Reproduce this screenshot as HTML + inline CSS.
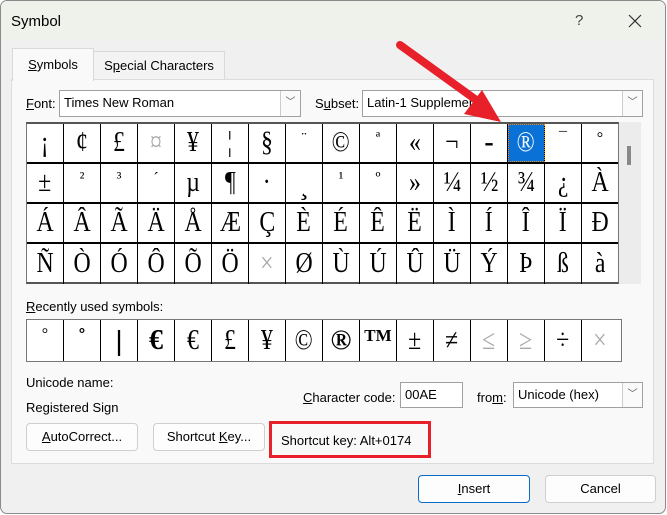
<!DOCTYPE html>
<html><head><meta charset="utf-8"><style>
*{box-sizing:border-box;margin:0;padding:0}
body{width:667px;height:515px;background:#fff;font-family:"Liberation Sans",sans-serif;font-size:12px;color:#000;position:relative;overflow:hidden}
.win{position:absolute;left:0;top:0;width:666px;height:514px;border:1px solid #8a8a8a;border-radius:7px;background:#f0f0f0;overflow:hidden}
.title{position:absolute;left:0;top:0;width:100%;height:39px;background:#eef2ea}
.a{position:absolute}
.panel{position:absolute;left:10px;top:78px;width:643px;height:385px;background:#f9f9f9;border:1px solid #dcdcdc}
.tab{position:absolute;border:1px solid #d9d9d9;border-bottom:none;background:#f9f9f9;font-size:13px;text-align:center}
.combo{position:absolute;background:#fff;border:1px solid #a0a0a0;font-size:13px;padding:4px 0 0 4px}
.combo .dd{position:absolute;right:0;top:0;bottom:0;width:20px;border-left:1px solid #ccc;background:#fafafa;font-size:10px;color:#555;text-align:center;line-height:24px}
.grid{position:absolute;left:25px;top:121px;width:593px;height:162px;background:#fff;border:1px solid #777;border-top:2px solid #555;border-bottom:2px solid #555}
.row{display:flex;height:40px;border-bottom:2px solid #000}
.row:last-child{border-bottom:none}
.c{width:37px;border-right:1px solid #000;font-family:"Liberation Serif","DejaVu Serif",serif;font-size:28px;display:flex;align-items:center;justify-content:center;flex:none}
.c span{display:inline-block;transform:scaleX(.85)}
.c:last-child{border-right:none;width:36px}
.sm{font-size:16px;align-items:flex-start;padding-top:6px}
.sel{background:#0a72d6;color:#fff;outline:1px dotted #f80;outline-offset:-1px}
.gray{color:#aaa}
.btn{position:absolute;height:28px;background:#fdfdfd;border:1px solid #cfcfcf;border-radius:4px;font-size:13px;text-align:center;line-height:26px}
u{text-decoration:underline}
</style></head><body>
<div class="win">
<div class="title"></div>
<div class="a" style="left:10px;top:12px;font-size:15px">Symbol</div>
<div class="a" style="left:574px;top:11px;font-size:15px;color:#444">?</div>
<svg class="a" style="left:627px;top:13px" width="14" height="14"><path d="M1 1L13 13M13 1L1 13" stroke="#333" stroke-width="1.2"/></svg>
<div class="panel"></div>
<div class="tab" style="left:92px;top:50px;width:132px;height:28px;line-height:27px;background:#f3f3f3"><span>S<u>p</u>ecial Characters</span></div>
<div class="tab" style="left:11px;top:47px;width:82px;height:33px;line-height:32px;z-index:2"><u>S</u>ymbols</div>
<div class="a" style="left:25px;top:95px;font-size:13px"><u>F</u>ont:</div>
<div class="combo" style="left:58px;top:89px;width:242px;height:27px">Times New Roman<div class="dd">﹀</div></div>
<div class="a" style="left:314px;top:95px;font-size:13px">S<u>u</u>bset:</div>
<div class="combo" style="left:361px;top:89px;width:281px;height:27px">Latin-1 Supplement<div class="dd">﹀</div></div>
<div class="grid">
<div class="row"><div class="c"><span>¡</span></div><div class="c"><span>¢</span></div><div class="c"><span>£</span></div><div class="c gray"><span>¤</span></div><div class="c"><span>¥</span></div><div class="c"><span>¦</span></div><div class="c"><span>§</span></div><div class="c sm">¨</div><div class="c"><span>©</span></div><div class="c sm">ª</div><div class="c"><span>«</span></div><div class="c"><span>¬</span></div><div class="c"><b>-</b></div><div class="c sel"><span>®</span></div><div class="c sm">¯</div><div class="c sm">°</div></div>
<div class="row"><div class="c"><span>±</span></div><div class="c sm">²</div><div class="c sm">³</div><div class="c sm">´</div><div class="c"><span>µ</span></div><div class="c"><span>¶</span></div><div class="c"><span>·</span></div><div class="c" style="align-items:flex-end">¸</div><div class="c sm">¹</div><div class="c sm">º</div><div class="c"><span>»</span></div><div class="c"><span>¼</span></div><div class="c"><span>½</span></div><div class="c"><span>¾</span></div><div class="c"><span>¿</span></div><div class="c"><span>À</span></div></div>
<div class="row"><div class="c"><span>Á</span></div><div class="c"><span>Â</span></div><div class="c"><span>Ã</span></div><div class="c"><span>Ä</span></div><div class="c"><span>Å</span></div><div class="c"><span>Æ</span></div><div class="c"><span>Ç</span></div><div class="c"><span>È</span></div><div class="c"><span>É</span></div><div class="c"><span>Ê</span></div><div class="c"><span>Ë</span></div><div class="c"><span>Ì</span></div><div class="c"><span>Í</span></div><div class="c"><span>Î</span></div><div class="c"><span>Ï</span></div><div class="c"><span>Ð</span></div></div>
<div class="row"><div class="c"><span>Ñ</span></div><div class="c"><span>Ò</span></div><div class="c"><span>Ó</span></div><div class="c"><span>Ô</span></div><div class="c"><span>Õ</span></div><div class="c"><span>Ö</span></div><div class="c gray"><span>×</span></div><div class="c"><span>Ø</span></div><div class="c"><span>Ù</span></div><div class="c"><span>Ú</span></div><div class="c"><span>Û</span></div><div class="c"><span>Ü</span></div><div class="c"><span>Ý</span></div><div class="c"><span>Þ</span></div><div class="c"><span>ß</span></div><div class="c"><span>à</span></div></div>
</div>
<div class="a" style="left:618px;top:121px;width:22px;height:162px;background:#ececec"></div>
<div class="a" style="left:626px;top:145px;width:4px;height:19px;background:#888"></div>
<div class="a" style="left:25px;top:298px;font-size:13px"><u>R</u>ecently used symbols:</div>
<div class="grid" style="top:318px;height:43px;width:596px;border:1px solid #777">
<div class="row" style="height:41px"><div class="c sm">°</div><div class="c sm" style="font-family:'Liberation Sans'"><b>°</b></div><div class="c" style="font-family:'Liberation Sans'">|</div><div class="c"><b>€</b></div><div class="c"><span>€</span></div><div class="c"><span>£</span></div><div class="c"><span>¥</span></div><div class="c"><span>©</span></div><div class="c"><b>®</b></div><div class="c" style="font-size:17px;align-items:flex-start;padding-top:6px"><b>TM</b></div><div class="c"><span>±</span></div><div class="c"><span>≠</span></div><div class="c gray"><span>≤</span></div><div class="c gray"><span>≥</span></div><div class="c"><span>÷</span></div><div class="c gray" style="border-right:none"><span>×</span></div></div>
</div>
<div class="a" style="left:25px;top:374px;font-size:13px">Unicode name:</div>
<div class="a" style="left:25px;top:399px;font-size:13px">Registered Sign</div>
<div class="a" style="left:302px;top:389px;font-size:13px"><u>C</u>haracter code:</div>
<div class="combo" style="left:399px;top:381px;width:63px;height:26px">00AE</div>
<div class="a" style="left:476px;top:389px;font-size:13px">fro<u>m</u>:</div>
<div class="combo" style="left:512px;top:381px;width:130px;height:26px">Unicode (hex)<div class="dd">﹀</div></div>
<div class="btn" style="left:25px;top:422px;width:112px"><u>A</u>utoCorrect...</div>
<div class="btn" style="left:152px;top:422px;width:112px">Shortcut <u>K</u>ey...</div>
<div class="a" style="left:268px;top:420px;width:162px;height:37px;border:3px solid #e8202a;font-size:13px;padding:9px 0 0 9px">Shortcut key: Alt+0174</div>
<div class="btn" style="left:417px;top:474px;width:112px;border:1px solid #0a6cc8"><u>I</u>nsert</div>
<div class="btn" style="left:544px;top:474px;width:111px">Cancel</div>
<svg class="a" style="left:0;top:0" width="667" height="515"><line x1="399" y1="44" x2="478" y2="101" stroke="#e8202a" stroke-width="8" stroke-linecap="round"/><polygon points="463,113 481,89 500,121" fill="#e8202a"/></svg>
</div>
</body></html>
